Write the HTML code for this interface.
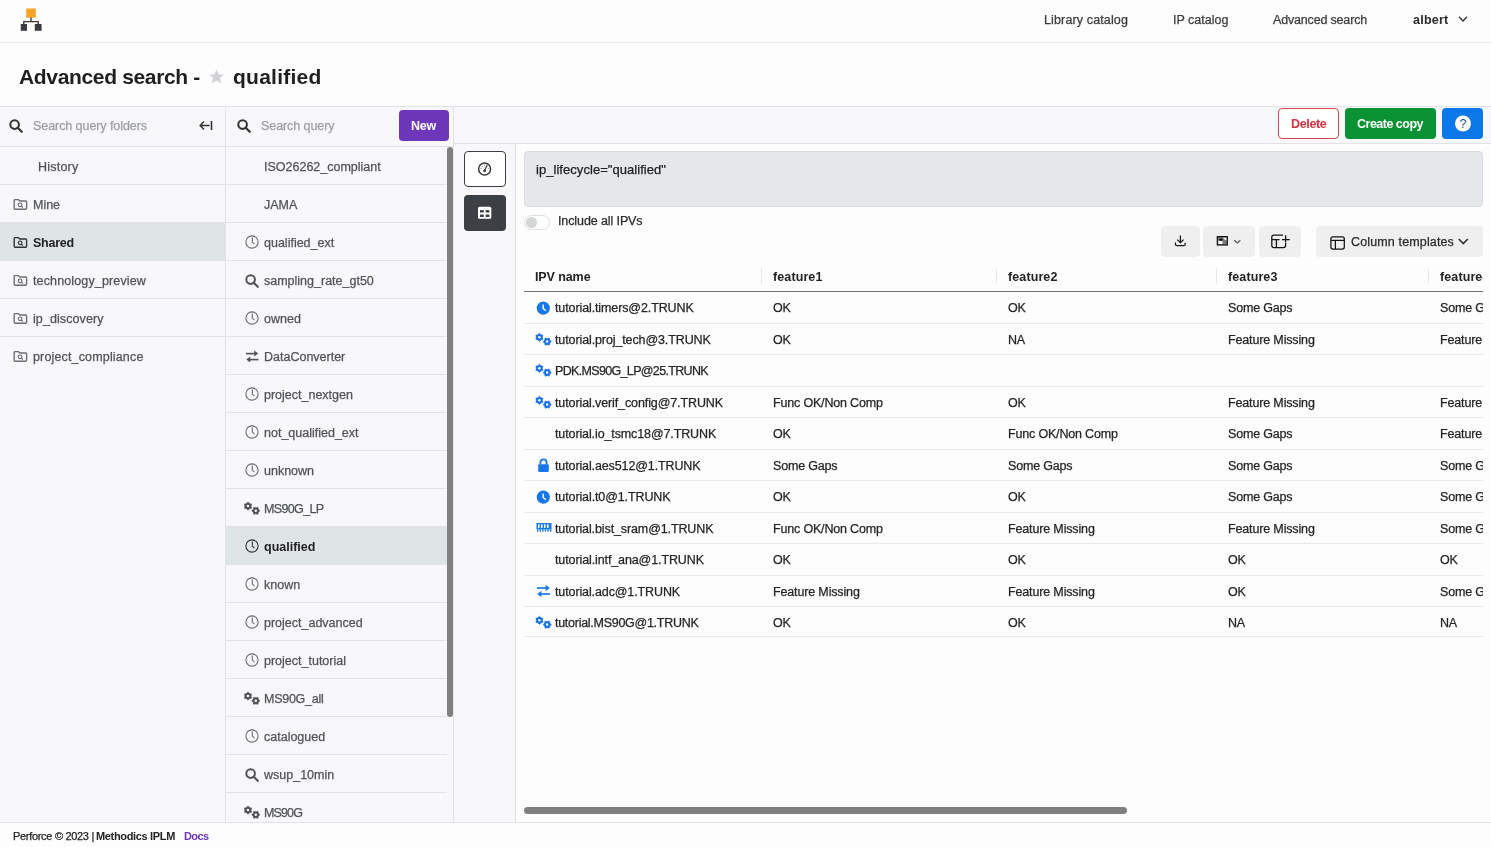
<!DOCTYPE html>
<html><head><meta charset="utf-8"><title>Advanced search</title>
<style>
html,body{margin:0;padding:0;}
body{width:1491px;height:847px;position:relative;overflow:hidden;background:#fdfdfd;font-family:"Liberation Sans",sans-serif;}
svg{display:block}
.t{will-change:transform}
.r{-webkit-text-stroke:0.25px currentColor}
</style></head><body>
<div style="position:absolute;left:0px;top:42px;width:1491px;height:1px;background:#e8e8ea;"></div>
<svg style="position:absolute;left:20px;top:8px" width="24" height="24" viewBox="0 0 24 24">
<rect x="6.2" y="0.5" width="9.6" height="9.2" fill="#f7a325"/>
<rect x="10.3" y="9.5" width="1.4" height="4" fill="#3a3a40"/>
<path d="M3.8 17 V13.6 H18.2 V17" fill="none" stroke="#3a3a40" stroke-width="1.4"/>
<rect x="0.8" y="16" width="6.2" height="6.8" fill="#3a3a40"/>
<rect x="14.8" y="16" width="6.8" height="6.8" fill="#3a3a40"/>
</svg>
<svg style="position:absolute;left:1457px;top:15px" width="12" height="8" viewBox="0 0 12 8"><polyline points="2,1.8 6,6 10,1.8" fill="none" stroke="#333" stroke-width="1.3"/></svg>
<svg style="position:absolute;left:208px;top:68px" width="17" height="17" viewBox="0 0 17 17"><polygon points="8.5,1.5 10.6,6.3 15.8,6.7 11.9,10.1 13.1,15.3 8.5,12.6 3.9,15.3 5.1,10.1 1.2,6.7 6.4,6.3" fill="#d3d3d7"/></svg>
<div style="position:absolute;left:0px;top:106px;width:1491px;height:1px;background:#e3e2e5;"></div>
<div style="position:absolute;left:0px;top:107px;width:225px;height:715px;background:#f8f7f9;"></div>
<div style="position:absolute;left:225px;top:107px;width:1px;height:715px;background:#e3e2e5;"></div>
<div style="position:absolute;left:226px;top:107px;width:227px;height:715px;background:#f8f7f9;"></div>
<div style="position:absolute;left:453px;top:107px;width:1px;height:715px;background:#e3e2e5;"></div>
<div style="position:absolute;left:454px;top:107px;width:1037px;height:36px;background:#f8f7f9;"></div>
<div style="position:absolute;left:454px;top:143px;width:1037px;height:1px;background:#e3e2e5;"></div>
<div style="position:absolute;left:454px;top:144px;width:61px;height:678px;background:#f8f7f9;"></div>
<div style="position:absolute;left:515px;top:144px;width:1px;height:678px;background:#e3e2e5;"></div>
<div style="position:absolute;left:0px;top:822px;width:1491px;height:1px;background:#e3e2e5;"></div>
<div style="position:absolute;left:0px;top:823px;width:1491px;height:24px;background:#fdfdfd;"></div>
<div style="position:absolute;left:0px;top:146px;width:225px;height:1px;background:#e3e2e5;"></div>
<svg style="position:absolute;left:8.6px;top:118.6px" width="15" height="15" viewBox="0 0 15 15"><circle cx="5.6" cy="5.6" r="4.3" fill="none" stroke="#333" stroke-width="2"/><line x1="8.7" y1="8.7" x2="12.8" y2="12.8" stroke="#333" stroke-width="2.2" stroke-linecap="round"/></svg>
<svg style="position:absolute;left:198px;top:119px" width="16" height="14" viewBox="0 0 16 14"><path d="M2.2 6.5 H11.5 M6 2.6 L2.2 6.5 L6 10.4" fill="none" stroke="#333" stroke-width="1.5"/><line x1="13.5" y1="2" x2="13.5" y2="11" stroke="#333" stroke-width="1.6"/></svg>
<div style="position:absolute;left:0px;top:184px;width:225px;height:1px;background:#e3e2e5;"></div>
<svg style="position:absolute;left:12.8px;top:197.89999999999998px" width="15" height="13" viewBox="0 0 15 13"><path d="M1.2 2.6 Q1.2 1.6 2.2 1.6 H5.4 L6.8 3 H12.6 Q13.6 3 13.6 4 V10.2 Q13.6 11.2 12.6 11.2 H2.2 Q1.2 11.2 1.2 10.2 Z" fill="none" stroke="#6a6d72" stroke-width="1.35"/><circle cx="7.1" cy="6.8" r="1.8" fill="none" stroke="#6a6d72" stroke-width="1.15"/><line x1="8.4" y1="8.1" x2="9.9" y2="9.5" stroke="#6a6d72" stroke-width="1.2"/></svg>
<div style="position:absolute;left:0px;top:223px;width:225px;height:38px;background:#dfe4e7;"></div>
<div style="position:absolute;left:0px;top:222px;width:225px;height:1px;background:#e3e2e5;"></div>
<svg style="position:absolute;left:12.8px;top:235.89999999999998px" width="15" height="13" viewBox="0 0 15 13"><path d="M1.2 2.6 Q1.2 1.6 2.2 1.6 H5.4 L6.8 3 H12.6 Q13.6 3 13.6 4 V10.2 Q13.6 11.2 12.6 11.2 H2.2 Q1.2 11.2 1.2 10.2 Z" fill="none" stroke="#2f3134" stroke-width="1.35"/><circle cx="7.1" cy="6.8" r="1.8" fill="none" stroke="#2f3134" stroke-width="1.15"/><line x1="8.4" y1="8.1" x2="9.9" y2="9.5" stroke="#2f3134" stroke-width="1.2"/></svg>
<div style="position:absolute;left:0px;top:260px;width:225px;height:1px;background:#e3e2e5;"></div>
<svg style="position:absolute;left:12.8px;top:273.9px" width="15" height="13" viewBox="0 0 15 13"><path d="M1.2 2.6 Q1.2 1.6 2.2 1.6 H5.4 L6.8 3 H12.6 Q13.6 3 13.6 4 V10.2 Q13.6 11.2 12.6 11.2 H2.2 Q1.2 11.2 1.2 10.2 Z" fill="none" stroke="#6a6d72" stroke-width="1.35"/><circle cx="7.1" cy="6.8" r="1.8" fill="none" stroke="#6a6d72" stroke-width="1.15"/><line x1="8.4" y1="8.1" x2="9.9" y2="9.5" stroke="#6a6d72" stroke-width="1.2"/></svg>
<div style="position:absolute;left:0px;top:298px;width:225px;height:1px;background:#e3e2e5;"></div>
<svg style="position:absolute;left:12.8px;top:311.9px" width="15" height="13" viewBox="0 0 15 13"><path d="M1.2 2.6 Q1.2 1.6 2.2 1.6 H5.4 L6.8 3 H12.6 Q13.6 3 13.6 4 V10.2 Q13.6 11.2 12.6 11.2 H2.2 Q1.2 11.2 1.2 10.2 Z" fill="none" stroke="#6a6d72" stroke-width="1.35"/><circle cx="7.1" cy="6.8" r="1.8" fill="none" stroke="#6a6d72" stroke-width="1.15"/><line x1="8.4" y1="8.1" x2="9.9" y2="9.5" stroke="#6a6d72" stroke-width="1.2"/></svg>
<div style="position:absolute;left:0px;top:336px;width:225px;height:1px;background:#e3e2e5;"></div>
<svg style="position:absolute;left:12.8px;top:349.9px" width="15" height="13" viewBox="0 0 15 13"><path d="M1.2 2.6 Q1.2 1.6 2.2 1.6 H5.4 L6.8 3 H12.6 Q13.6 3 13.6 4 V10.2 Q13.6 11.2 12.6 11.2 H2.2 Q1.2 11.2 1.2 10.2 Z" fill="none" stroke="#6a6d72" stroke-width="1.35"/><circle cx="7.1" cy="6.8" r="1.8" fill="none" stroke="#6a6d72" stroke-width="1.15"/><line x1="8.4" y1="8.1" x2="9.9" y2="9.5" stroke="#6a6d72" stroke-width="1.2"/></svg>
<div style="position:absolute;left:226px;top:146px;width:227px;height:1px;background:#e3e2e5;"></div>
<svg style="position:absolute;left:236.8px;top:118.6px" width="15" height="15" viewBox="0 0 15 15"><circle cx="5.6" cy="5.6" r="4.3" fill="none" stroke="#333" stroke-width="2"/><line x1="8.7" y1="8.7" x2="12.8" y2="12.8" stroke="#333" stroke-width="2.2" stroke-linecap="round"/></svg>
<div style="position:absolute;left:399px;top:110px;width:50px;height:31px;background:#6e36b9;border-radius:4px"></div>
<div style="position:absolute;left:226px;top:184px;width:221px;height:1px;background:#e3e2e5;"></div>
<div style="position:absolute;left:226px;top:222px;width:221px;height:1px;background:#e3e2e5;"></div>
<svg style="position:absolute;left:245.2px;top:234.6px" width="14" height="14" viewBox="0 0 14 14"><circle cx="7" cy="7" r="6.1" fill="none" stroke="#6a6d72" stroke-width="1.1"/><path d="M7.3 2.5 V7.1 L9.5 9.1" fill="none" stroke="#6a6d72" stroke-width="1.1"/></svg>
<div style="position:absolute;left:226px;top:260px;width:221px;height:1px;background:#e3e2e5;"></div>
<svg style="position:absolute;left:245.4px;top:273.59999999999997px" width="15" height="15" viewBox="0 0 15 15"><circle cx="5.6" cy="5.6" r="4.3" fill="none" stroke="#505357" stroke-width="2"/><line x1="8.7" y1="8.7" x2="12.8" y2="12.8" stroke="#505357" stroke-width="2.2" stroke-linecap="round"/></svg>
<div style="position:absolute;left:226px;top:298px;width:221px;height:1px;background:#e3e2e5;"></div>
<svg style="position:absolute;left:245.2px;top:310.59999999999997px" width="14" height="14" viewBox="0 0 14 14"><circle cx="7" cy="7" r="6.1" fill="none" stroke="#6a6d72" stroke-width="1.1"/><path d="M7.3 2.5 V7.1 L9.5 9.1" fill="none" stroke="#6a6d72" stroke-width="1.1"/></svg>
<div style="position:absolute;left:226px;top:336px;width:221px;height:1px;background:#e3e2e5;"></div>
<svg style="position:absolute;left:245.2px;top:350.2px" width="15" height="12" viewBox="0 0 15 12"><path d="M1 3.6 H10" stroke="#505357" stroke-width="1.6"/><polygon points="9.2,0.6 13.2,3.6 9.2,6.6" fill="#505357"/><path d="M4.5 9.6 H13.5" stroke="#505357" stroke-width="1.6"/><polygon points="5.3,6.6 1.3,9.6 5.3,12.6" fill="#505357"/></svg>
<div style="position:absolute;left:226px;top:374px;width:221px;height:1px;background:#e3e2e5;"></div>
<svg style="position:absolute;left:245.2px;top:386.59999999999997px" width="14" height="14" viewBox="0 0 14 14"><circle cx="7" cy="7" r="6.1" fill="none" stroke="#6a6d72" stroke-width="1.1"/><path d="M7.3 2.5 V7.1 L9.5 9.1" fill="none" stroke="#6a6d72" stroke-width="1.1"/></svg>
<div style="position:absolute;left:226px;top:412px;width:221px;height:1px;background:#e3e2e5;"></div>
<svg style="position:absolute;left:245.2px;top:424.59999999999997px" width="14" height="14" viewBox="0 0 14 14"><circle cx="7" cy="7" r="6.1" fill="none" stroke="#6a6d72" stroke-width="1.1"/><path d="M7.3 2.5 V7.1 L9.5 9.1" fill="none" stroke="#6a6d72" stroke-width="1.1"/></svg>
<div style="position:absolute;left:226px;top:450px;width:221px;height:1px;background:#e3e2e5;"></div>
<svg style="position:absolute;left:245.2px;top:462.59999999999997px" width="14" height="14" viewBox="0 0 14 14"><circle cx="7" cy="7" r="6.1" fill="none" stroke="#6a6d72" stroke-width="1.1"/><path d="M7.3 2.5 V7.1 L9.5 9.1" fill="none" stroke="#6a6d72" stroke-width="1.1"/></svg>
<div style="position:absolute;left:226px;top:488px;width:221px;height:1px;background:#e3e2e5;"></div>
<svg style="position:absolute;left:240px;top:496.2px" width="22" height="22" viewBox="0 0 22 22"><polygon points="8.00,14.20 6.48,12.73 4.45,12.15 4.97,10.10 4.45,8.05 6.48,7.47 8.00,6.00 9.52,7.47 11.55,8.05 11.03,10.10 11.55,12.15 9.52,12.73" fill="#505357" stroke="#505357" stroke-width="0.6" stroke-linejoin="round"/><circle cx="8" cy="10.100000000000023" r="1.23" fill="#f8f7f9"/><polygon points="19.90,14.80 18.43,16.32 17.85,18.35 15.80,17.83 13.75,18.35 13.17,16.32 11.70,14.80 13.17,13.28 13.75,11.25 15.80,11.77 17.85,11.25 18.43,13.28" fill="#505357" stroke="#505357" stroke-width="0.6" stroke-linejoin="round"/><circle cx="15.800000000000011" cy="14.800000000000011" r="1.23" fill="#f8f7f9"/></svg>
<div style="position:absolute;left:226px;top:527px;width:221px;height:37px;background:#dfe4e7;"></div>
<div style="position:absolute;left:226px;top:526px;width:221px;height:1px;background:#e3e2e5;"></div>
<svg style="position:absolute;left:245.2px;top:538.6px" width="14" height="14" viewBox="0 0 14 14"><circle cx="7" cy="7" r="6.1" fill="none" stroke="#2f3134" stroke-width="1.1"/><path d="M7.3 2.5 V7.1 L9.5 9.1" fill="none" stroke="#2f3134" stroke-width="1.1"/></svg>
<div style="position:absolute;left:226px;top:564px;width:221px;height:1px;background:#e3e2e5;"></div>
<svg style="position:absolute;left:245.2px;top:576.6px" width="14" height="14" viewBox="0 0 14 14"><circle cx="7" cy="7" r="6.1" fill="none" stroke="#6a6d72" stroke-width="1.1"/><path d="M7.3 2.5 V7.1 L9.5 9.1" fill="none" stroke="#6a6d72" stroke-width="1.1"/></svg>
<div style="position:absolute;left:226px;top:602px;width:221px;height:1px;background:#e3e2e5;"></div>
<svg style="position:absolute;left:245.2px;top:614.6px" width="14" height="14" viewBox="0 0 14 14"><circle cx="7" cy="7" r="6.1" fill="none" stroke="#6a6d72" stroke-width="1.1"/><path d="M7.3 2.5 V7.1 L9.5 9.1" fill="none" stroke="#6a6d72" stroke-width="1.1"/></svg>
<div style="position:absolute;left:226px;top:640px;width:221px;height:1px;background:#e3e2e5;"></div>
<svg style="position:absolute;left:245.2px;top:652.6px" width="14" height="14" viewBox="0 0 14 14"><circle cx="7" cy="7" r="6.1" fill="none" stroke="#6a6d72" stroke-width="1.1"/><path d="M7.3 2.5 V7.1 L9.5 9.1" fill="none" stroke="#6a6d72" stroke-width="1.1"/></svg>
<div style="position:absolute;left:226px;top:678px;width:221px;height:1px;background:#e3e2e5;"></div>
<svg style="position:absolute;left:240px;top:686.2px" width="22" height="22" viewBox="0 0 22 22"><polygon points="8.00,14.20 6.48,12.73 4.45,12.15 4.97,10.10 4.45,8.05 6.48,7.47 8.00,6.00 9.52,7.47 11.55,8.05 11.03,10.10 11.55,12.15 9.52,12.73" fill="#505357" stroke="#505357" stroke-width="0.6" stroke-linejoin="round"/><circle cx="8" cy="10.100000000000023" r="1.23" fill="#f8f7f9"/><polygon points="19.90,14.80 18.43,16.32 17.85,18.35 15.80,17.83 13.75,18.35 13.17,16.32 11.70,14.80 13.17,13.28 13.75,11.25 15.80,11.77 17.85,11.25 18.43,13.28" fill="#505357" stroke="#505357" stroke-width="0.6" stroke-linejoin="round"/><circle cx="15.800000000000011" cy="14.799999999999955" r="1.23" fill="#f8f7f9"/></svg>
<div style="position:absolute;left:226px;top:716px;width:221px;height:1px;background:#e3e2e5;"></div>
<svg style="position:absolute;left:245.2px;top:728.6px" width="14" height="14" viewBox="0 0 14 14"><circle cx="7" cy="7" r="6.1" fill="none" stroke="#6a6d72" stroke-width="1.1"/><path d="M7.3 2.5 V7.1 L9.5 9.1" fill="none" stroke="#6a6d72" stroke-width="1.1"/></svg>
<div style="position:absolute;left:226px;top:754px;width:221px;height:1px;background:#e3e2e5;"></div>
<svg style="position:absolute;left:245.4px;top:767.6000000000001px" width="15" height="15" viewBox="0 0 15 15"><circle cx="5.6" cy="5.6" r="4.3" fill="none" stroke="#505357" stroke-width="2"/><line x1="8.7" y1="8.7" x2="12.8" y2="12.8" stroke="#505357" stroke-width="2.2" stroke-linecap="round"/></svg>
<div style="position:absolute;left:226px;top:792px;width:221px;height:1px;background:#e3e2e5;"></div>
<svg style="position:absolute;left:240px;top:800.2px" width="22" height="22" viewBox="0 0 22 22"><polygon points="8.00,14.20 6.48,12.73 4.45,12.15 4.97,10.10 4.45,8.05 6.48,7.47 8.00,6.00 9.52,7.47 11.55,8.05 11.03,10.10 11.55,12.15 9.52,12.73" fill="#505357" stroke="#505357" stroke-width="0.6" stroke-linejoin="round"/><circle cx="8" cy="10.100000000000023" r="1.23" fill="#f8f7f9"/><polygon points="19.90,14.80 18.43,16.32 17.85,18.35 15.80,17.83 13.75,18.35 13.17,16.32 11.70,14.80 13.17,13.28 13.75,11.25 15.80,11.77 17.85,11.25 18.43,13.28" fill="#505357" stroke="#505357" stroke-width="0.6" stroke-linejoin="round"/><circle cx="15.800000000000011" cy="14.799999999999955" r="1.23" fill="#f8f7f9"/></svg>
<div style="position:absolute;left:226px;top:823px;width:227px;height:24px;background:#fdfdfd;"></div>
<div style="position:absolute;left:447px;top:147px;width:6px;height:570px;background:#808080;border-radius:3px"></div>
<div style="position:absolute;left:1278px;top:108px;width:59px;height:29px;background:#fff;border:1px solid #d9454f;border-radius:4px"></div>
<div style="position:absolute;left:1345px;top:108px;width:91px;height:31px;background:#0b9234;border-radius:4px"></div>
<div style="position:absolute;left:1442px;top:108px;width:41px;height:31px;background:#0b78ea;border-radius:4px"></div>
<svg style="position:absolute;left:1454px;top:115px" width="18" height="18" viewBox="0 0 18 18"><circle cx="9" cy="8.5" r="8" fill="#fff"/><text x="9" y="13" text-anchor="middle" font-family="Liberation Sans" font-weight="400" font-size="12.5" fill="#2d4f86">?</text></svg>
<div style="position:absolute;left:464px;top:151px;width:40px;height:34px;background:#fff;border:1px solid #3d3d3f;border-radius:4px"></div>
<svg style="position:absolute;left:476px;top:160px" width="18" height="18" viewBox="0 0 18 18"><circle cx="8.6" cy="9" r="6" fill="none" stroke="#3a3a3c" stroke-width="1.5"/><path d="M8.6 4.6 V5.4 M5.6 5.9 L6.1 6.5 M11.6 5.9 L11.1 6.5 M4.5 8.6 H5.3 M12.7 8.6 H11.9" stroke="#3a3a3c" stroke-width="0.8"/><line x1="8.6" y1="10.6" x2="10.9" y2="5.6" stroke="#3a3a3c" stroke-width="1.3" stroke-linecap="round"/><circle cx="8.6" cy="10.8" r="1.4" fill="#3a3a3c"/></svg>
<div style="position:absolute;left:464px;top:195px;width:42px;height:36px;background:#3c4045;border-radius:4px"></div>
<svg style="position:absolute;left:478px;top:206px" width="14" height="14" viewBox="0 0 14 14"><rect x="0" y="0.7" width="13.3" height="12.1" rx="1.6" fill="#fff"/><rect x="2" y="4.1" width="3.8" height="2.4" fill="#3c4045"/><rect x="7.6" y="4.1" width="3.8" height="2.4" fill="#3c4045"/><rect x="2" y="8.5" width="3.8" height="2.5" fill="#3c4045"/><rect x="7.6" y="8.5" width="3.8" height="2.5" fill="#3c4045"/></svg>
<div style="position:absolute;left:524px;top:151px;width:957px;height:54px;background:#e5e7eb;border:1px solid #dadce0;border-radius:4px"></div>
<div style="position:absolute;left:524px;top:215px;width:24px;height:13px;background:#fff;border:1px solid #dedfe2;border-radius:8px"></div>
<div style="position:absolute;left:526px;top:217px;width:11px;height:11px;background:#d4d5d8;border-radius:6px"></div>
<div style="position:absolute;left:1161px;top:226px;width:39px;height:31px;background:#efefef;border-radius:4px"></div>
<div style="position:absolute;left:1203px;top:226px;width:52px;height:31px;background:#efefef;border-radius:4px"></div>
<div style="position:absolute;left:1259px;top:226px;width:42px;height:31px;background:#efefef;border-radius:4px"></div>
<div style="position:absolute;left:1316px;top:226px;width:167px;height:31px;background:#efefef;border-radius:4px"></div>
<svg style="position:absolute;left:1168px;top:231px" width="24" height="20" viewBox="0 0 24 20"><path d="M12.4 4.5 V11.4 M9.2 8.6 L12.4 11.6 L15.6 8.6" fill="none" stroke="#1c1c1c" stroke-width="1.3"/><path d="M7.4 11.6 V13 Q7.4 14.6 9 14.6 H15.6 Q17.2 14.6 17.2 13 V11.8" fill="none" stroke="#1c1c1c" stroke-width="1.3"/></svg>
<svg style="position:absolute;left:1212px;top:231px" width="34" height="20" viewBox="0 0 34 20"><rect x="5.3" y="5.6" width="10" height="8.4" fill="#7a7a7a" stroke="#111" stroke-width="1.2"/><rect x="6.4" y="9.6" width="4" height="3.4" fill="#fff"/><polygon points="11,6.8 14.4,6.8 14.4,9.5 12,8" fill="#fff"/><ellipse cx="8.9" cy="8.8" rx="1.8" ry="1.3" fill="#111"/><polyline points="22.2,9.3 25.3,12 28.4,9.3" fill="none" stroke="#555" stroke-width="1.2"/></svg>
<svg style="position:absolute;left:1266px;top:231px" width="26" height="20" viewBox="0 0 26 20"><path d="M17.1 4.1 H7.8 Q5.8 4.1 5.8 6.1 V14.6 Q5.8 16.6 7.8 16.6 H17.6 Q19.6 16.6 19.6 14.6 V11.9" fill="none" stroke="#161616" stroke-width="1.3"/><path d="M5.8 8.6 H13.6 M10.4 8.6 V16.6 M15.9 8.6 H23.8 M19.6 4.2 V11.6" fill="none" stroke="#161616" stroke-width="1.3"/></svg>
<svg style="position:absolute;left:1325px;top:231px" width="24" height="20" viewBox="0 0 24 20"><rect x="5.9" y="5.8" width="13.4" height="12.2" rx="2" fill="none" stroke="#111" stroke-width="1.25"/><line x1="5.9" y1="9.4" x2="19.3" y2="9.4" stroke="#111" stroke-width="1.25"/><line x1="10.4" y1="9.4" x2="10.4" y2="18" stroke="#111" stroke-width="1.25"/></svg>
<svg style="position:absolute;left:1457px;top:237px" width="13" height="9" viewBox="0 0 13 9"><polyline points="1.8,2 6.3,6.5 10.8,2" fill="none" stroke="#333" stroke-width="1.7"/></svg>
<div style="position:absolute;left:761px;top:268px;width:1px;height:16px;background:#e6e6e8;"></div>
<div style="position:absolute;left:996px;top:268px;width:1px;height:16px;background:#e6e6e8;"></div>
<div style="position:absolute;left:1216px;top:268px;width:1px;height:16px;background:#e6e6e8;"></div>
<div style="position:absolute;left:1428px;top:268px;width:1px;height:16px;background:#e6e6e8;"></div>
<div style="position:absolute;left:524px;top:291px;width:959px;height:1px;background:#707070;"></div>
<div style="position:absolute;left:524px;top:323px;width:959px;height:1px;background:#e9e9eb;"></div>
<svg style="position:absolute;left:536px;top:300.9px" width="15" height="15" viewBox="0 0 15 15"><circle cx="7.3" cy="7.1" r="6.6" fill="#1877e8"/><path d="M7.2 3.4 V7.4 L9.8 9.8" fill="none" stroke="#fff" stroke-width="1.4"/></svg>
<div style="position:absolute;left:524px;top:354px;width:959px;height:1px;background:#e9e9eb;"></div>
<svg style="position:absolute;left:532px;top:328.9px" width="22" height="22" viewBox="0 0 22 22"><polygon points="7.40,12.40 5.88,10.93 3.85,10.35 4.37,8.30 3.85,6.25 5.88,5.67 7.40,4.20 8.92,5.67 10.95,6.25 10.43,8.30 10.95,10.35 8.92,10.93" fill="#1871dc" stroke="#1871dc" stroke-width="0.6" stroke-linejoin="round"/><circle cx="7.399999999999977" cy="8.300000000000011" r="1.23" fill="#fdfdfd"/><polygon points="19.30,12.60 17.83,14.12 17.25,16.15 15.20,15.63 13.15,16.15 12.57,14.12 11.10,12.60 12.57,11.08 13.15,9.05 15.20,9.57 17.25,9.05 17.83,11.08" fill="#1871dc" stroke="#1871dc" stroke-width="0.6" stroke-linejoin="round"/><circle cx="15.200000000000045" cy="12.600000000000023" r="1.23" fill="#fdfdfd"/></svg>
<div style="position:absolute;left:524px;top:386px;width:959px;height:1px;background:#e9e9eb;"></div>
<svg style="position:absolute;left:532px;top:360.4px" width="22" height="22" viewBox="0 0 22 22"><polygon points="7.40,12.40 5.88,10.93 3.85,10.35 4.37,8.30 3.85,6.25 5.88,5.67 7.40,4.20 8.92,5.67 10.95,6.25 10.43,8.30 10.95,10.35 8.92,10.93" fill="#1871dc" stroke="#1871dc" stroke-width="0.6" stroke-linejoin="round"/><circle cx="7.399999999999977" cy="8.300000000000011" r="1.23" fill="#fdfdfd"/><polygon points="19.30,12.60 17.83,14.12 17.25,16.15 15.20,15.63 13.15,16.15 12.57,14.12 11.10,12.60 12.57,11.08 13.15,9.05 15.20,9.57 17.25,9.05 17.83,11.08" fill="#1871dc" stroke="#1871dc" stroke-width="0.6" stroke-linejoin="round"/><circle cx="15.200000000000045" cy="12.600000000000023" r="1.23" fill="#fdfdfd"/></svg>
<div style="position:absolute;left:524px;top:417px;width:959px;height:1px;background:#e9e9eb;"></div>
<svg style="position:absolute;left:532px;top:391.9px" width="22" height="22" viewBox="0 0 22 22"><polygon points="7.40,12.40 5.88,10.93 3.85,10.35 4.37,8.30 3.85,6.25 5.88,5.67 7.40,4.20 8.92,5.67 10.95,6.25 10.43,8.30 10.95,10.35 8.92,10.93" fill="#1871dc" stroke="#1871dc" stroke-width="0.6" stroke-linejoin="round"/><circle cx="7.399999999999977" cy="8.300000000000011" r="1.23" fill="#fdfdfd"/><polygon points="19.30,12.60 17.83,14.12 17.25,16.15 15.20,15.63 13.15,16.15 12.57,14.12 11.10,12.60 12.57,11.08 13.15,9.05 15.20,9.57 17.25,9.05 17.83,11.08" fill="#1871dc" stroke="#1871dc" stroke-width="0.6" stroke-linejoin="round"/><circle cx="15.200000000000045" cy="12.600000000000023" r="1.23" fill="#fdfdfd"/></svg>
<div style="position:absolute;left:524px;top:449px;width:959px;height:1px;background:#e9e9eb;"></div>
<div style="position:absolute;left:524px;top:480px;width:959px;height:1px;background:#e9e9eb;"></div>
<svg style="position:absolute;left:537px;top:458.09999999999997px" width="13" height="15" viewBox="0 0 13 15"><path d="M3.4 6.5 V4.6 Q3.4 1.4 6.5 1.4 Q9.6 1.4 9.6 4.6 V6.5" fill="none" stroke="#1877e8" stroke-width="1.8"/><rect x="1.2" y="6.3" width="10.6" height="7.6" rx="1.2" fill="#1877e8"/></svg>
<div style="position:absolute;left:524px;top:512px;width:959px;height:1px;background:#e9e9eb;"></div>
<svg style="position:absolute;left:536px;top:489.9px" width="15" height="15" viewBox="0 0 15 15"><circle cx="7.3" cy="7.1" r="6.6" fill="#1877e8"/><path d="M7.2 3.4 V7.4 L9.8 9.8" fill="none" stroke="#fff" stroke-width="1.4"/></svg>
<div style="position:absolute;left:524px;top:543px;width:959px;height:1px;background:#e9e9eb;"></div>
<svg style="position:absolute;left:535.5px;top:521px" width="16" height="12" viewBox="0 0 16 12"><rect x="0.5" y="2" width="15" height="6.5" fill="#1877e8"/><rect x="2" y="3.3" width="1.6" height="3.6" fill="#fdfdfd"/><rect x="5" y="3.3" width="1.6" height="3.6" fill="#fdfdfd"/><rect x="8" y="3.3" width="1.6" height="3.6" fill="#fdfdfd"/><rect x="11" y="3.3" width="1.6" height="3.6" fill="#fdfdfd"/><rect x="1.0" y="8.5" width="1.4" height="2.2" fill="#1877e8"/><rect x="3.6" y="8.5" width="1.4" height="2.2" fill="#1877e8"/><rect x="6.2" y="8.5" width="1.4" height="2.2" fill="#1877e8"/><rect x="8.8" y="8.5" width="1.4" height="2.2" fill="#1877e8"/><rect x="11.4" y="8.5" width="1.4" height="2.2" fill="#1877e8"/><rect x="14.0" y="8.5" width="1.4" height="2.2" fill="#1877e8"/></svg>
<div style="position:absolute;left:524px;top:575px;width:959px;height:1px;background:#e9e9eb;"></div>
<div style="position:absolute;left:524px;top:606px;width:959px;height:1px;background:#e9e9eb;"></div>
<svg style="position:absolute;left:536px;top:584.4px" width="15" height="14" viewBox="0 0 15 14"><path d="M1 4 H10.5" stroke="#1877e8" stroke-width="1.7"/><polygon points="9.6,0.8 13.8,4 9.6,7.2" fill="#1877e8"/><path d="M4.5 10 H14" stroke="#1877e8" stroke-width="1.7"/><polygon points="5.4,6.8 1.2,10 5.4,13.2" fill="#1877e8"/></svg>
<div style="position:absolute;left:524px;top:636px;width:959px;height:1px;background:#e9e9eb;"></div>
<svg style="position:absolute;left:532px;top:612.4px" width="22" height="22" viewBox="0 0 22 22"><polygon points="7.40,12.40 5.88,10.93 3.85,10.35 4.37,8.30 3.85,6.25 5.88,5.67 7.40,4.20 8.92,5.67 10.95,6.25 10.43,8.30 10.95,10.35 8.92,10.93" fill="#1871dc" stroke="#1871dc" stroke-width="0.6" stroke-linejoin="round"/><circle cx="7.399999999999977" cy="8.299999999999955" r="1.23" fill="#fdfdfd"/><polygon points="19.30,12.60 17.83,14.12 17.25,16.15 15.20,15.63 13.15,16.15 12.57,14.12 11.10,12.60 12.57,11.08 13.15,9.05 15.20,9.57 17.25,9.05 17.83,11.08" fill="#1871dc" stroke="#1871dc" stroke-width="0.6" stroke-linejoin="round"/><circle cx="15.200000000000045" cy="12.600000000000023" r="1.23" fill="#fdfdfd"/></svg>
<div style="position:absolute;left:524px;top:807px;width:603px;height:7px;background:#7f7f7f;border-radius:3.5px"></div>
<div class="t r" style="position:absolute;left:1044px;top:11.90px;line-height:16px;font-size:12.5px;font-weight:400;color:#3b3b3d;white-space:pre;letter-spacing:0.133px;">Library catalog</div>
<div class="t r" style="position:absolute;left:1172.6px;top:11.90px;line-height:16px;font-size:12.5px;font-weight:400;color:#3b3b3d;white-space:pre;letter-spacing:0.013px;">IP catalog</div>
<div class="t r" style="position:absolute;left:1272.8px;top:11.70px;line-height:16px;font-size:12.5px;font-weight:400;color:#3b3b3d;white-space:pre;letter-spacing:-0.173px;">Advanced search</div>
<div class="t" style="position:absolute;left:1413px;top:11.70px;line-height:16px;font-size:12.5px;font-weight:700;color:#2b2b2d;white-space:pre;letter-spacing:0.242px;">albert</div>
<div class="t" style="position:absolute;left:18.5px;top:62.50px;line-height:27px;font-size:21px;font-weight:700;color:#1f1f21;white-space:pre;letter-spacing:-0.338px;">Advanced search -</div>
<div class="t" style="position:absolute;left:232.7px;top:62.50px;line-height:27px;font-size:21px;font-weight:700;color:#1f1f21;white-space:pre;letter-spacing:0.240px;">qualified</div>
<div class="t r" style="position:absolute;left:33.3px;top:117.80px;line-height:16px;font-size:12.5px;font-weight:400;color:#9b9ea3;white-space:pre;letter-spacing:-0.067px;">Search query folders</div>
<div class="t r" style="position:absolute;left:38px;top:159.00px;line-height:16px;font-size:12.5px;font-weight:400;color:#505357;white-space:pre;letter-spacing:0.228px;">History</div>
<div class="t r" style="position:absolute;left:32.6px;top:197.10px;line-height:16px;font-size:12.5px;font-weight:400;color:#505357;white-space:pre;letter-spacing:-0.023px;">Mine</div>
<div class="t" style="position:absolute;left:32.6px;top:235.10px;line-height:16px;font-size:12.5px;font-weight:700;color:#212326;white-space:pre;letter-spacing:-0.232px;">Shared</div>
<div class="t r" style="position:absolute;left:32.6px;top:273.10px;line-height:16px;font-size:12.5px;font-weight:400;color:#505357;white-space:pre;letter-spacing:0.139px;">technology_preview</div>
<div class="t r" style="position:absolute;left:32.6px;top:311.10px;line-height:16px;font-size:12.5px;font-weight:400;color:#505357;white-space:pre;letter-spacing:0.085px;">ip_discovery</div>
<div class="t r" style="position:absolute;left:32.6px;top:349.10px;line-height:16px;font-size:12.5px;font-weight:400;color:#505357;white-space:pre;letter-spacing:0.155px;">project_compliance</div>
<div class="t r" style="position:absolute;left:261.2px;top:117.80px;line-height:16px;font-size:12.5px;font-weight:400;color:#9b9ea3;white-space:pre;letter-spacing:-0.072px;">Search query</div>
<div class="t" style="position:absolute;left:411.2px;top:118.00px;line-height:16px;font-size:12.5px;font-weight:700;color:#ffffff;white-space:pre;letter-spacing:-0.234px;">New</div>
<div class="t r" style="position:absolute;left:264.2px;top:159.00px;line-height:16px;font-size:12.5px;font-weight:400;color:#505357;white-space:pre;">ISO26262_compliant</div>
<div class="t r" style="position:absolute;left:264.2px;top:197.00px;line-height:16px;font-size:12.5px;font-weight:400;color:#505357;white-space:pre;">JAMA</div>
<div class="t r" style="position:absolute;left:264.2px;top:235.00px;line-height:16px;font-size:12.5px;font-weight:400;color:#505357;white-space:pre;">qualified_ext</div>
<div class="t r" style="position:absolute;left:264.2px;top:273.00px;line-height:16px;font-size:12.5px;font-weight:400;color:#505357;white-space:pre;">sampling_rate_gt50</div>
<div class="t r" style="position:absolute;left:264.2px;top:311.00px;line-height:16px;font-size:12.5px;font-weight:400;color:#505357;white-space:pre;">owned</div>
<div class="t r" style="position:absolute;left:264.2px;top:349.00px;line-height:16px;font-size:12.5px;font-weight:400;color:#505357;white-space:pre;">DataConverter</div>
<div class="t r" style="position:absolute;left:264.2px;top:387.00px;line-height:16px;font-size:12.5px;font-weight:400;color:#505357;white-space:pre;">project_nextgen</div>
<div class="t r" style="position:absolute;left:264.2px;top:425.00px;line-height:16px;font-size:12.5px;font-weight:400;color:#505357;white-space:pre;">not_qualified_ext</div>
<div class="t r" style="position:absolute;left:264.2px;top:463.00px;line-height:16px;font-size:12.5px;font-weight:400;color:#505357;white-space:pre;">unknown</div>
<div class="t r" style="position:absolute;left:264.2px;top:501.00px;line-height:16px;font-size:12.5px;font-weight:400;color:#505357;white-space:pre;letter-spacing:-0.641px;">MS90G_LP</div>
<div class="t" style="position:absolute;left:264.2px;top:539.00px;line-height:16px;font-size:12.5px;font-weight:700;color:#212326;white-space:pre;">qualified</div>
<div class="t r" style="position:absolute;left:264.2px;top:577.00px;line-height:16px;font-size:12.5px;font-weight:400;color:#505357;white-space:pre;">known</div>
<div class="t r" style="position:absolute;left:264.2px;top:615.00px;line-height:16px;font-size:12.5px;font-weight:400;color:#505357;white-space:pre;">project_advanced</div>
<div class="t r" style="position:absolute;left:264.2px;top:653.00px;line-height:16px;font-size:12.5px;font-weight:400;color:#505357;white-space:pre;">project_tutorial</div>
<div class="t r" style="position:absolute;left:264.2px;top:691.00px;line-height:16px;font-size:12.5px;font-weight:400;color:#505357;white-space:pre;letter-spacing:-0.260px;">MS90G_all</div>
<div class="t r" style="position:absolute;left:264.2px;top:729.00px;line-height:16px;font-size:12.5px;font-weight:400;color:#505357;white-space:pre;">catalogued</div>
<div class="t r" style="position:absolute;left:264.2px;top:767.00px;line-height:16px;font-size:12.5px;font-weight:400;color:#505357;white-space:pre;">wsup_10min</div>
<div class="t r" style="position:absolute;left:264.2px;top:805.00px;line-height:16px;font-size:12.5px;font-weight:400;color:#505357;white-space:pre;letter-spacing:-0.878px;">MS90G</div>
<div class="t" style="position:absolute;left:1291px;top:116.20px;line-height:16px;font-size:12.5px;font-weight:700;color:#d3313e;white-space:pre;letter-spacing:-0.339px;">Delete</div>
<div class="t" style="position:absolute;left:1357.2px;top:116.20px;line-height:16px;font-size:12.5px;font-weight:700;color:#ffffff;white-space:pre;letter-spacing:-0.506px;">Create copy</div>
<div class="t r" style="position:absolute;left:535.7px;top:160.90px;line-height:17px;font-size:13px;font-weight:400;color:#202124;white-space:pre;letter-spacing:0.048px;">ip_lifecycle=&quot;qualified&quot;</div>
<div class="t r" style="position:absolute;left:557.7px;top:213.20px;line-height:16px;font-size:12.5px;font-weight:400;color:#2b2b2d;white-space:pre;letter-spacing:-0.104px;">Include all IPVs</div>
<div class="t r" style="position:absolute;left:1351.2px;top:234.30px;line-height:16px;font-size:12.5px;font-weight:400;color:#2b2b2d;white-space:pre;letter-spacing:0.141px;">Column templates</div>
<div class="t" style="position:absolute;left:534.8px;top:268.60px;line-height:16px;font-size:12.5px;font-weight:700;color:#222325;white-space:pre;letter-spacing:-0.098px;">IPV name</div>
<div class="t" style="position:absolute;left:772.6px;top:268.60px;line-height:16px;font-size:12.5px;font-weight:700;color:#222325;white-space:pre;letter-spacing:0.107px;">feature1</div>
<div class="t" style="position:absolute;left:1007.6px;top:268.60px;line-height:16px;font-size:12.5px;font-weight:700;color:#222325;white-space:pre;letter-spacing:0.107px;">feature2</div>
<div class="t" style="position:absolute;left:1228px;top:268.60px;line-height:16px;font-size:12.5px;font-weight:700;color:#222325;white-space:pre;letter-spacing:0.107px;">feature3</div>
<div class="t" style="position:absolute;left:1440px;top:268.60px;line-height:16px;font-size:12.5px;font-weight:700;color:#222325;white-space:pre;letter-spacing:0.107px;">feature4</div>
<div class="t r" style="position:absolute;left:554.9px;top:300.00px;line-height:16px;font-size:12.5px;font-weight:400;color:#232426;white-space:pre;letter-spacing:-0.110px;">tutorial.timers@2.TRUNK</div>
<div class="t r" style="position:absolute;left:772.6px;top:300.00px;line-height:16px;font-size:12.5px;font-weight:400;color:#232426;white-space:pre;letter-spacing:-0.226px;">OK</div>
<div class="t r" style="position:absolute;left:1007.6px;top:300.00px;line-height:16px;font-size:12.5px;font-weight:400;color:#232426;white-space:pre;letter-spacing:-0.226px;">OK</div>
<div class="t r" style="position:absolute;left:1228px;top:300.00px;line-height:16px;font-size:12.5px;font-weight:400;color:#232426;white-space:pre;letter-spacing:-0.183px;">Some Gaps</div>
<div class="t r" style="position:absolute;left:1440px;top:300.00px;line-height:16px;font-size:12.5px;font-weight:400;color:#232426;white-space:pre;letter-spacing:-0.183px;">Some Gaps</div>
<div class="t r" style="position:absolute;left:554.9px;top:331.50px;line-height:16px;font-size:12.5px;font-weight:400;color:#232426;white-space:pre;letter-spacing:-0.110px;">tutorial.proj_tech@3.TRUNK</div>
<div class="t r" style="position:absolute;left:772.6px;top:331.50px;line-height:16px;font-size:12.5px;font-weight:400;color:#232426;white-space:pre;letter-spacing:-0.226px;">OK</div>
<div class="t r" style="position:absolute;left:1007.6px;top:331.50px;line-height:16px;font-size:12.5px;font-weight:400;color:#232426;white-space:pre;letter-spacing:-0.217px;">NA</div>
<div class="t r" style="position:absolute;left:1228px;top:331.50px;line-height:16px;font-size:12.5px;font-weight:400;color:#232426;white-space:pre;letter-spacing:-0.148px;">Feature Missing</div>
<div class="t r" style="position:absolute;left:1440px;top:331.50px;line-height:16px;font-size:12.5px;font-weight:400;color:#232426;white-space:pre;letter-spacing:-0.148px;">Feature Missing</div>
<div class="t r" style="position:absolute;left:554.9px;top:363.00px;line-height:16px;font-size:12.5px;font-weight:400;color:#232426;white-space:pre;letter-spacing:-0.663px;">PDK.MS90G_LP@25.TRUNK</div>
<div class="t r" style="position:absolute;left:554.9px;top:394.50px;line-height:16px;font-size:12.5px;font-weight:400;color:#232426;white-space:pre;letter-spacing:-0.106px;">tutorial.verif_config@7.TRUNK</div>
<div class="t r" style="position:absolute;left:772.6px;top:394.50px;line-height:16px;font-size:12.5px;font-weight:400;color:#232426;white-space:pre;letter-spacing:-0.176px;">Func OK/Non Comp</div>
<div class="t r" style="position:absolute;left:1007.6px;top:394.50px;line-height:16px;font-size:12.5px;font-weight:400;color:#232426;white-space:pre;letter-spacing:-0.226px;">OK</div>
<div class="t r" style="position:absolute;left:1228px;top:394.50px;line-height:16px;font-size:12.5px;font-weight:400;color:#232426;white-space:pre;letter-spacing:-0.148px;">Feature Missing</div>
<div class="t r" style="position:absolute;left:1440px;top:394.50px;line-height:16px;font-size:12.5px;font-weight:400;color:#232426;white-space:pre;letter-spacing:-0.148px;">Feature Missing</div>
<div class="t r" style="position:absolute;left:554.9px;top:426.00px;line-height:16px;font-size:12.5px;font-weight:400;color:#232426;white-space:pre;letter-spacing:-0.114px;">tutorial.io_tsmc18@7.TRUNK</div>
<div class="t r" style="position:absolute;left:772.6px;top:426.00px;line-height:16px;font-size:12.5px;font-weight:400;color:#232426;white-space:pre;letter-spacing:-0.226px;">OK</div>
<div class="t r" style="position:absolute;left:1007.6px;top:426.00px;line-height:16px;font-size:12.5px;font-weight:400;color:#232426;white-space:pre;letter-spacing:-0.176px;">Func OK/Non Comp</div>
<div class="t r" style="position:absolute;left:1228px;top:426.00px;line-height:16px;font-size:12.5px;font-weight:400;color:#232426;white-space:pre;letter-spacing:-0.183px;">Some Gaps</div>
<div class="t r" style="position:absolute;left:1440px;top:426.00px;line-height:16px;font-size:12.5px;font-weight:400;color:#232426;white-space:pre;letter-spacing:-0.148px;">Feature Missing</div>
<div class="t r" style="position:absolute;left:554.9px;top:457.50px;line-height:16px;font-size:12.5px;font-weight:400;color:#232426;white-space:pre;letter-spacing:-0.116px;">tutorial.aes512@1.TRUNK</div>
<div class="t r" style="position:absolute;left:772.6px;top:457.50px;line-height:16px;font-size:12.5px;font-weight:400;color:#232426;white-space:pre;letter-spacing:-0.183px;">Some Gaps</div>
<div class="t r" style="position:absolute;left:1007.6px;top:457.50px;line-height:16px;font-size:12.5px;font-weight:400;color:#232426;white-space:pre;letter-spacing:-0.183px;">Some Gaps</div>
<div class="t r" style="position:absolute;left:1228px;top:457.50px;line-height:16px;font-size:12.5px;font-weight:400;color:#232426;white-space:pre;letter-spacing:-0.183px;">Some Gaps</div>
<div class="t r" style="position:absolute;left:1440px;top:457.50px;line-height:16px;font-size:12.5px;font-weight:400;color:#232426;white-space:pre;letter-spacing:-0.183px;">Some Gaps</div>
<div class="t r" style="position:absolute;left:554.9px;top:489.00px;line-height:16px;font-size:12.5px;font-weight:400;color:#232426;white-space:pre;letter-spacing:-0.111px;">tutorial.t0@1.TRUNK</div>
<div class="t r" style="position:absolute;left:772.6px;top:489.00px;line-height:16px;font-size:12.5px;font-weight:400;color:#232426;white-space:pre;letter-spacing:-0.226px;">OK</div>
<div class="t r" style="position:absolute;left:1007.6px;top:489.00px;line-height:16px;font-size:12.5px;font-weight:400;color:#232426;white-space:pre;letter-spacing:-0.226px;">OK</div>
<div class="t r" style="position:absolute;left:1228px;top:489.00px;line-height:16px;font-size:12.5px;font-weight:400;color:#232426;white-space:pre;letter-spacing:-0.183px;">Some Gaps</div>
<div class="t r" style="position:absolute;left:1440px;top:489.00px;line-height:16px;font-size:12.5px;font-weight:400;color:#232426;white-space:pre;letter-spacing:-0.183px;">Some Gaps</div>
<div class="t r" style="position:absolute;left:554.9px;top:520.50px;line-height:16px;font-size:12.5px;font-weight:400;color:#232426;white-space:pre;letter-spacing:-0.112px;">tutorial.bist_sram@1.TRUNK</div>
<div class="t r" style="position:absolute;left:772.6px;top:520.50px;line-height:16px;font-size:12.5px;font-weight:400;color:#232426;white-space:pre;letter-spacing:-0.176px;">Func OK/Non Comp</div>
<div class="t r" style="position:absolute;left:1007.6px;top:520.50px;line-height:16px;font-size:12.5px;font-weight:400;color:#232426;white-space:pre;letter-spacing:-0.148px;">Feature Missing</div>
<div class="t r" style="position:absolute;left:1228px;top:520.50px;line-height:16px;font-size:12.5px;font-weight:400;color:#232426;white-space:pre;letter-spacing:-0.148px;">Feature Missing</div>
<div class="t r" style="position:absolute;left:1440px;top:520.50px;line-height:16px;font-size:12.5px;font-weight:400;color:#232426;white-space:pre;letter-spacing:-0.183px;">Some Gaps</div>
<div class="t r" style="position:absolute;left:554.9px;top:552.00px;line-height:16px;font-size:12.5px;font-weight:400;color:#232426;white-space:pre;letter-spacing:-0.109px;">tutorial.intf_ana@1.TRUNK</div>
<div class="t r" style="position:absolute;left:772.6px;top:552.00px;line-height:16px;font-size:12.5px;font-weight:400;color:#232426;white-space:pre;letter-spacing:-0.226px;">OK</div>
<div class="t r" style="position:absolute;left:1007.6px;top:552.00px;line-height:16px;font-size:12.5px;font-weight:400;color:#232426;white-space:pre;letter-spacing:-0.226px;">OK</div>
<div class="t r" style="position:absolute;left:1228px;top:552.00px;line-height:16px;font-size:12.5px;font-weight:400;color:#232426;white-space:pre;letter-spacing:-0.226px;">OK</div>
<div class="t r" style="position:absolute;left:1440px;top:552.00px;line-height:16px;font-size:12.5px;font-weight:400;color:#232426;white-space:pre;letter-spacing:-0.226px;">OK</div>
<div class="t r" style="position:absolute;left:554.9px;top:583.50px;line-height:16px;font-size:12.5px;font-weight:400;color:#232426;white-space:pre;letter-spacing:-0.115px;">tutorial.adc@1.TRUNK</div>
<div class="t r" style="position:absolute;left:772.6px;top:583.50px;line-height:16px;font-size:12.5px;font-weight:400;color:#232426;white-space:pre;letter-spacing:-0.148px;">Feature Missing</div>
<div class="t r" style="position:absolute;left:1007.6px;top:583.50px;line-height:16px;font-size:12.5px;font-weight:400;color:#232426;white-space:pre;letter-spacing:-0.148px;">Feature Missing</div>
<div class="t r" style="position:absolute;left:1228px;top:583.50px;line-height:16px;font-size:12.5px;font-weight:400;color:#232426;white-space:pre;letter-spacing:-0.226px;">OK</div>
<div class="t r" style="position:absolute;left:1440px;top:583.50px;line-height:16px;font-size:12.5px;font-weight:400;color:#232426;white-space:pre;letter-spacing:-0.183px;">Some Gaps</div>
<div class="t r" style="position:absolute;left:554.9px;top:615.00px;line-height:16px;font-size:12.5px;font-weight:400;color:#232426;white-space:pre;letter-spacing:-0.275px;">tutorial.MS90G@1.TRUNK</div>
<div class="t r" style="position:absolute;left:772.6px;top:615.00px;line-height:16px;font-size:12.5px;font-weight:400;color:#232426;white-space:pre;letter-spacing:-0.226px;">OK</div>
<div class="t r" style="position:absolute;left:1007.6px;top:615.00px;line-height:16px;font-size:12.5px;font-weight:400;color:#232426;white-space:pre;letter-spacing:-0.226px;">OK</div>
<div class="t r" style="position:absolute;left:1228px;top:615.00px;line-height:16px;font-size:12.5px;font-weight:400;color:#232426;white-space:pre;letter-spacing:-0.217px;">NA</div>
<div class="t r" style="position:absolute;left:1440px;top:615.00px;line-height:16px;font-size:12.5px;font-weight:400;color:#232426;white-space:pre;letter-spacing:-0.217px;">NA</div>
<div class="t r" style="position:absolute;left:13px;top:829.40px;line-height:14px;font-size:11px;font-weight:400;color:#222;white-space:pre;letter-spacing:-0.305px;">Perforce © 2023 |</div>
<div class="t" style="position:absolute;left:95.6px;top:829.40px;line-height:14px;font-size:11px;font-weight:700;color:#222;white-space:pre;letter-spacing:-0.338px;">Methodics IPLM</div>
<div class="t" style="position:absolute;left:184.2px;top:829.40px;line-height:14px;font-size:11px;font-weight:700;color:#6a35b8;white-space:pre;letter-spacing:-0.602px;">Docs</div>
<div style="position:absolute;left:1483px;top:255px;width:8px;height:400px;background:#fdfdfd"></div>
</body></html>
